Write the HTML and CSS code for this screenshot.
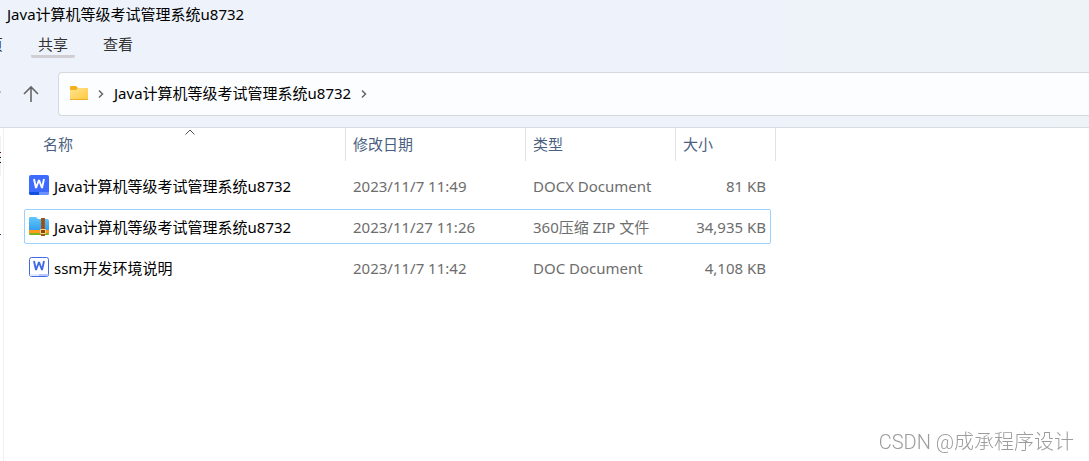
FILE: index.html
```html
<!DOCTYPE html>
<html lang="zh-CN">
<head>
  <meta charset="UTF-8" />
  <meta name="viewport" content="width=device-width, initial-scale=1.0"/>
  <title>Java计算机等级考试管理系统u8732</title>
  <link rel="stylesheet" href="styles.css">
</head>
<body>
  <header class="top">
    <h1 class="title">Java计算机等级考试管理系统u8732</h1>
    <nav class="tabs">
      <button class="tab tab-home">主页</button>
      <button class="tab active">共享</button>
      <button class="tab">查看</button>
    </nav>
    <div class="toolbar">
      <button class="recent" aria-label="最近">
        <svg width="8" height="6" viewBox="0 0 8 6"><path d="M1 4l3-3 3 0" fill="none" stroke="#888" stroke-width="1.2"/></svg>
      </button>
      <button class="up" aria-label="向上">
        <svg width="18" height="18" viewBox="0 0 18 18"><path d="M9 17V2M2 9l7-7 7 7" fill="none" stroke="#666" stroke-width="1.6"/></svg>
      </button>
      <div class="address">
        <svg class="folder" width="18" height="14" viewBox="0 0 18 14">
          <defs>
            <linearGradient id="folder-fill" x1="0" y1="0" x2="1" y2="1">
              <stop offset="0" stop-color="#ffe394"/>
              <stop offset="1" stop-color="#ffc93c"/>
            </linearGradient>
          </defs>
          <path d="M0 1q0-1 1-1h5l2 2h9q1 0 1 1v4H0z" fill="#f5b01d"/>
          <path d="M0 4h6l2-2h9q1 0 1 1v10q0 1-1 1H1q-1 0-1-1z" fill="url(#folder-fill)"/>
          <path d="M0 13.5h18" stroke="#eeb02c"/>
        </svg>
        <svg class="chevron" width="6" height="8" viewBox="0 0 6 8"><path d="M1 .5L4.500 4 1 7.500" fill="none" stroke="#666" stroke-width="1.5"/></svg>
        <a class="crumb" href="#">Java计算机等级考试管理系统u8732</a>
        <svg class="chevron" width="6" height="8" viewBox="0 0 6 8"><path d="M1 .5L4.500 4 1 7.500" fill="none" stroke="#666" stroke-width="1.5"/></svg>
      </div>
    </div>
  </header>

  <main class="content">
    <aside class="side">
      <svg width="1" height="100" viewBox="0 0 1 100">
        <path d="M0 0h1v40H0z" fill="#f0f0f0"/>
        <path d="M0 16h1v1H0z" fill="#5a1010"/>
        <path d="M0 21h1v1H0zM0 26h1v1H0z" fill="#111"/>
        <path d="M0 98h1v1H0z" fill="#123c8c"/>
      </svg>
    </aside>
    <table class="files">
      <colgroup>
        <col class="col-name">
        <col class="col-date">
        <col class="col-type">
        <col class="col-size">
      </colgroup>
      <thead>
        <tr>
          <th>
            名称
            <svg class="sort" width="10" height="6" viewBox="0 0 10 6"><path d="M.5 5.500L5 1l4.500 4.500" fill="none" stroke="#555"/></svg>
          </th>
          <th>修改日期</th>
          <th>类型</th>
          <th>大小</th>
        </tr>
      </thead>
      <tbody>
        <tr>
          <td>
            <div class="name">
              <svg width="20" height="20" viewBox="0 0 20 20">
                <rect width="20" height="20" rx="2" fill="#3d6bff"/>
                <path d="M0 17h10v3H2q-2 0-2-2z" fill="#1450e0"/>
                <path d="M10 17h10v1q0 2-2 2h-8z" fill="#6c91ff"/>
                <path d="M5 4l2 9 3-8 3 8 2-9" fill="none" stroke="#fff" stroke-width="1.900" stroke-linejoin="bevel"/>
              </svg>
              Java计算机等级考试管理系统u8732
            </div>
          </td>
          <td>2023/11/7 11:49</td>
          <td>DOCX Document</td>
          <td>81 KB</td>
        </tr>
        <tr class="selected">
          <td>
            <div class="name">
              <svg width="20" height="20" viewBox="0 0 20 20">
                <defs>
                  <linearGradient id="zip-fill" x1="0" y1="0" x2="0" y2="1">
                    <stop offset="0" stop-color="#62c8fb"/>
                    <stop offset="1" stop-color="#349fee"/>
                  </linearGradient>
                </defs>
                <path d="M0 2q0-1 1-1h6l2 2h9q2 0 2 2v9H0z" fill="url(#zip-fill)"/>
                <path d="M0 14h20v3H0z" fill="#ff9a1f"/>
                <path d="M0 17h20v1q0 1-1 1H1q-1 0-1-1z" fill="#7cb518"/>
                <path d="M12 2h4v18h-4z" fill="#a3561c"/>
                <path d="M14 3v10" stroke="#7d3d12" stroke-dasharray="1 1"/>
                <path d="M11.500 13.500h5v4h-5z" fill="#8b4513" stroke="#ffd28a"/>
              </svg>
              Java计算机等级考试管理系统u8732
            </div>
          </td>
          <td>2023/11/27 11:26</td>
          <td>360压缩 ZIP 文件</td>
          <td>34,935 KB</td>
        </tr>
        <tr>
          <td>
            <div class="name">
              <svg width="20" height="20" viewBox="0 0 20 20">
                <rect x=".5" y=".5" width="19" height="19" rx="2" fill="#fff" stroke="#4169e8"/>
                <path d="M10 17h9v2h-9z" fill="#b9c9ff"/>
                <path d="M1 17h9v2H1z" fill="#e4eaff"/>
                <path d="M5 4l2 9 3-8 3 8 2-9" fill="none" stroke="#4169e8" stroke-width="1.900" stroke-linejoin="bevel"/>
              </svg>
              ssm开发环境说明
            </div>
          </td>
          <td>2023/11/7 11:42</td>
          <td>DOC Document</td>
          <td>4,108 KB</td>
        </tr>
      </tbody>
    </table>
  </main>
  <div class="watermark">CSDN @成承程序设计</div>
</body>
</html>
```

FILE: styles.css
```css
* {
  box-sizing: border-box;
}
body {
  margin: 0;
  min-height: 100vh;
  display: flex;
  flex-direction: column;
  overflow: hidden;
  background: #fff;
  color: #000;
  font-family: "Noto Sans", "Noto Sans CJK SC", sans-serif;
  font-size: 15px;
  line-height: 20px;
}
button {
  border: 0;
  padding: 0;
  background: none;
  font: inherit;
}
svg {
  display: block;
  flex: none;
}
.top {
  background: linear-gradient(90deg, #eef3fb 60%, #edf3f7);
  border-bottom: 1px solid #d9dce2;
}
.title {
  margin: 0;
  padding: 4px 7px 6px;
  font-size: 15px;
  font-weight: 400;
}
.tabs {
  display: flex;
  gap: 21px;
  height: 28px;
  padding-top: 4px;
}
.tab {
  width: 44px;
  height: 24px;
  padding-bottom: 1px;
  color: #333;
  border-bottom: 3px solid transparent;
}
.tab-home {
  width: 30px;
  margin-left: -27px;
  margin-right: 7px;
}
.tab.active {
  border-bottom-color: #d0ced2;
  border-radius: 2px;
}
.toolbar {
  display: flex;
  align-items: center;
  padding: 14px 0 11px;
}
.recent {
  margin-left: -6px;
}
.up {
  margin: 0 18px 0 20px;
}
.address {
  flex: 1;
  display: flex;
  align-items: center;
  height: 44px;
  padding-left: 11px;
  background: #fcfdff;
  border: 1px solid #d5d8dc;
  border-right: 0;
  border-radius: 4px 0 0 4px;
}
.folder {
  margin-bottom: 2px;
}
.chevron {
  margin: 0 10px;
}
.crumb {
  padding-bottom: 2px;
  color: #000;
  text-decoration: none;
}
.content {
  flex: 1;
  display: flex;
  align-items: flex-start;
}
.side {
  width: 4px;
  padding-top: 8px;
  align-self: stretch;
  border-right: 1px solid #f1f1f1;
}
.files {
  width: 752px;
  margin-left: 20px;
  table-layout: fixed;
  border-collapse: separate;
  border-spacing: 0;
}
.col-name {
  width: 322px;
}
.col-date {
  width: 180px;
}
.col-type {
  width: 150px;
}
th {
  position: relative;
  height: 33px;
  padding: 0 7px 2px;
  border-right: 1px solid #e2e2e2;
  color: #4b5f80;
  font-weight: 400;
  text-align: left;
}
th:first-child {
  padding-left: 19px;
}
.sort {
  position: absolute;
  top: 1px;
  left: 50%;
}
tbody::before {
  content: "";
  display: block;
  height: 4px;
}
tr.selected {
  position: relative;
}
tr.selected td:last-child::after {
  content: "";
  position: absolute;
  inset: 3px 5px 3px 0;
  border: 1px solid #99d1ff;
  border-radius: 2px;
}
td {
  height: 41px;
  padding: 0 7px;
  color: #6d6d6d;
  white-space: nowrap;
}
td:first-child {
  padding-left: 5px;
}
td:last-child {
  padding-right: 10px;
  text-align: right;
}
.name {
  display: flex;
  align-items: center;
  gap: 5px;
  color: #000;
}
.name svg {
  margin-bottom: 2px;
}
.watermark {
  position: fixed;
  right: 15px;
  bottom: 6px;
  color: #9c9c9c;
  font-family: Roboto, "Noto Sans CJK SC", sans-serif;
  font-size: 20px;
  font-weight: 300;
  line-height: 26px;
}
```
